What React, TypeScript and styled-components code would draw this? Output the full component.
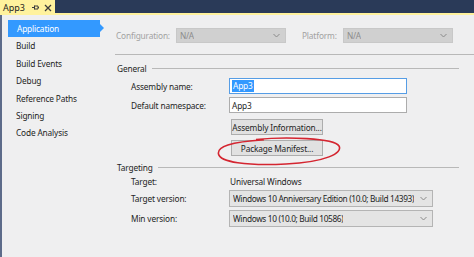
import React from 'react';
import styled, { createGlobalStyle } from 'styled-components';

const GlobalStyle = createGlobalStyle`
  html, body {
    margin: 0;
    padding: 0;
    background: #efeff0;
  }
  body {
    font-family: "Noto Sans", "Liberation Sans", sans-serif;
    font-size: 8.3px;
    letter-spacing: -0.15px;
    color: #1e1e1e;
  }
`;

const navItems = [
  'Application',
  'Build',
  'Build Events',
  'Debug',
  'Reference Paths',
  'Signing',
  'Code Analysis',
];

const Chevron: React.FC = () => (
  <svg width="7" height="5" viewBox="0 0 7 5">
    <path d="M0.5 1 L3.5 4 L6.5 1" fill="none" stroke="#8a8a8a" strokeWidth="1" />
  </svg>
);

const PinIcon: React.FC = () => (
  <svg width="9" height="9" viewBox="0 0 9 9">
    <path d="M1 4.5 H3.5 M3.5 2.5 V6.5 M3.5 3 H7 V6 H3.5 M7 4.5 H8" fill="none" stroke="#3c3c3c" strokeWidth="1" />
  </svg>
);

const CloseIcon: React.FC = () => (
  <svg width="8" height="8" viewBox="0 0 8 8">
    <path d="M1 1 L7 7 M7 1 L1 7" stroke="#3c3c3c" strokeWidth="1.3" />
  </svg>
);

const App: React.FC = () => {
  return (
    <>
      <GlobalStyle />
      <Window>
        <TitleBar>
          <DocTab>
            <span>App3</span>
            <PinIcon />
            <CloseIcon />
          </DocTab>
        </TitleBar>
        <Body>
          <Sidebar>
            {navItems.map((item, i) => (
              <NavItem key={item} $active={i === 0}>
                {item}
              </NavItem>
            ))}
          </Sidebar>
          <Main>
            <ConfigRow>
              <DimLabel>Configuration:</DimLabel>
              <Combo $disabled $width={110}>
                <span>N/A</span>
                <Chevron />
              </Combo>
              <DimLabel $gap={16}>Platform:</DimLabel>
              <Combo $disabled $width={110}>
                <span>N/A</span>
                <Chevron />
              </Combo>
            </ConfigRow>
            <Divider />
            <SectionHeading>
              <span>General</span>
            </SectionHeading>
            <FieldGrid>
              <FieldLabel>Assembly name:</FieldLabel>
              <TextInput $focused>
                <Selected>App3</Selected>
              </TextInput>
              <FieldLabel>Default namespace:</FieldLabel>
              <TextInput>App3</TextInput>
              <span />
              <ButtonStack>
                <PushButton>Assembly Information...</PushButton>
                <PushButton>Package Manifest...</PushButton>
                <Circle width="128" height="30" viewBox="0 0 128 30">
                  <path
                    d="M40 2.5 C70 -0.5 118 1 123 9 C127 16 110 25 70 27 C30 29 4 25 2.5 17 C1 10 14 5 48 2.8"
                    fill="none"
                    stroke="#d42530"
                    strokeWidth="1.6"
                  />
                </Circle>
              </ButtonStack>
            </FieldGrid>
            <SectionHeading $top={4}>
              <span>Targeting</span>
            </SectionHeading>
            <FieldGrid $rowGap={3} $top={2}>
              <FieldLabel>Target:</FieldLabel>
              <PlainValue>Universal Windows</PlainValue>
              <FieldLabel>Target version:</FieldLabel>
              <Combo $width={204}>
                <span>Windows 10 Anniversary Edition (10.0; Build 14393)</span>
                <Chevron />
              </Combo>
              <FieldLabel>Min version:</FieldLabel>
              <Combo $width={204}>
                <span>Windows 10 (10.0; Build 10586)</span>
                <Chevron />
              </Combo>
            </FieldGrid>
          </Main>
        </Body>
      </Window>
    </>
  );
};

const Window = styled.div`
  width: 474px;
  height: 257px;
  display: flex;
  flex-direction: column;
  overflow: hidden;
  background: #efeff0;
`;

const TitleBar = styled.div`
  height: 13px;
  background: #2a3a58;
  border-bottom: 2px solid #fff29d;
  display: flex;
  align-items: flex-start;
`;

const DocTab = styled.div`
  height: 15px;
  width: 55px;
  box-sizing: border-box;
  background: #fff29d;
  display: flex;
  align-items: center;
  gap: 4px;
  padding-left: 3px;
  font-size: 9px;
  letter-spacing: 0;
  color: #1e1e1e;
  span {
    margin-right: 2px;
  }
`;

const Body = styled.div`
  flex: 1;
  display: flex;
  border-left: 2px solid #5d6b8a;
`;

const Sidebar = styled.div`
  width: 106px;
  flex-shrink: 0;
  padding-top: 5px;
  padding-left: 6px;
  box-sizing: border-box;
`;

const NavItem = styled.div<{ $active?: boolean }>`
  position: relative;
  height: 17.4px;
  line-height: 17.4px;
  padding-left: ${(p) => (p.$active ? 9 : 8)}px;
  width: 92px;
  box-sizing: border-box;
  color: ${(p) => (p.$active ? '#ffffff' : '#1e1e1e')};
  background: ${(p) => (p.$active ? '#3399ff' : 'transparent')};
  &::after {
    content: '';
    display: ${(p) => (p.$active ? 'block' : 'none')};
    position: absolute;
    right: -4px;
    top: 4px;
    border-top: 4.5px solid transparent;
    border-bottom: 4.5px solid transparent;
    border-left: 4px solid #3399ff;
  }
`;

const Main = styled.div`
  flex: 1;
  padding-top: 13px;
  padding-left: 7px;
`;

const ConfigRow = styled.div`
  display: flex;
  align-items: center;
  padding-left: 1px;
`;

const DimLabel = styled.span<{ $gap?: number }>`
  color: #a2a2a2;
  margin-left: ${(p) => p.$gap ?? 0}px;
  width: ${(p) => (p.$gap ? 41 : 60)}px;
`;

const Combo = styled.div<{ $disabled?: boolean; $width: number }>`
  width: ${(p) => p.$width}px;
  height: ${(p) => (p.$disabled ? 15 : 17)}px;
  box-sizing: border-box;
  display: flex;
  align-items: center;
  justify-content: space-between;
  gap: 4px;
  padding: 0 5px 0 3px;
  background: ${(p) => (p.$disabled ? '#d0d0d0' : '#e4e4e4')};
  border: 1px solid ${(p) => (p.$disabled ? '#c8c8c8' : '#b4b4b4')};
  color: ${(p) => (p.$disabled ? '#8c8c8c' : '#1e1e1e')};
  white-space: nowrap;
  overflow: hidden;
  span {
    overflow: hidden;
    letter-spacing: -0.35px;
  }
  svg {
    flex-shrink: 0;
  }
`;

const Divider = styled.div`
  height: 1px;
  background: #b8b8b8;
  margin-top: 11px;
`;

const SectionHeading = styled.div<{ $top?: number }>`
  display: flex;
  align-items: center;
  gap: 5px;
  margin-top: ${(p) => p.$top ?? 6}px;
  margin-right: 15px;
  height: 14px;
  padding-left: 2px;
  &::after {
    content: '';
    flex: 1;
    height: 1px;
    background: #b8b8b8;
  }
`;

const FieldGrid = styled.div<{ $rowGap?: number; $top?: number }>`
  display: grid;
  grid-template-columns: 98px auto;
  justify-content: start;
  align-items: center;
  row-gap: ${(p) => p.$rowGap ?? 3}px;
  padding-left: 16px;
  margin-top: ${(p) => p.$top ?? 3}px;
`;

const FieldLabel = styled.span`
  color: #1e1e1e;
`;

const TextInput = styled.div<{ $focused?: boolean }>`
  width: 178px;
  height: 16px;
  box-sizing: border-box;
  background: #ffffff;
  border: 1px solid ${(p) => (p.$focused ? '#569de5' : '#acacac')};
  display: flex;
  align-items: center;
  padding-left: 2px;
`;

const Selected = styled.span`
  background: #3399ff;
  color: #ffffff;
  padding: 0 1px;
  line-height: 12px;
`;

const ButtonStack = styled.div`
  position: relative;
  display: flex;
  flex-direction: column;
  gap: 5px;
  padding-top: 3px;
  padding-left: 2px;
`;

const PushButton = styled.div`
  width: 92px;
  height: 16px;
  box-sizing: border-box;
  background: #e1e1e1;
  border: 1px solid #adadad;
  display: flex;
  align-items: center;
  justify-content: center;
  white-space: nowrap;
`;

const Circle = styled.svg`
  position: absolute;
  left: -13px;
  top: 21px;
  pointer-events: none;
`;

const PlainValue = styled.span`
  padding-left: 1px;
`;

export default App;
